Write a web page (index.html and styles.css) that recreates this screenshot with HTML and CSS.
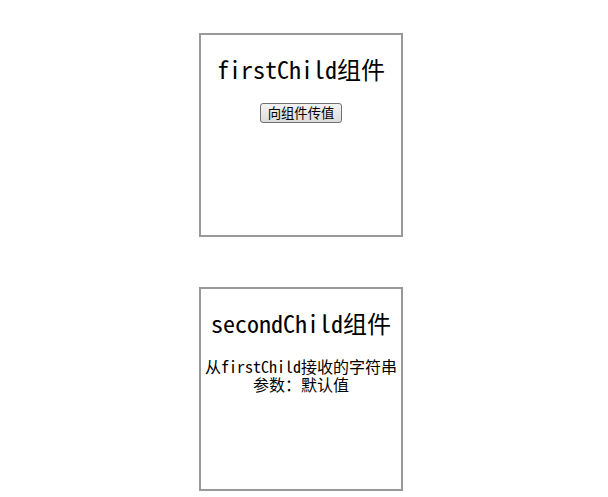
FILE: index.html
```html
<!DOCTYPE html>
<html>
<head>
  <meta charset="utf-8">
  <title>组件传值</title>
  <link rel="stylesheet" href="styles.css">
</head>
<body>

  <!--父组件容器-->
  <div id="app">

    <!--firstChild-->
    <div class="child-box">
      <h2 class="child-title">firstChild组件</h2>
      <button class="send-btn">向组件传值</button>
    </div>

    <!--secondChild-->
    <div class="child-box">
      <h2 class="child-title">secondChild组件</h2>
      <p class="child-msg">从firstChild接收的字符串参数：默认值</p>
    </div>

  </div>

</body>
</html>
```

FILE: styles.css
```css
body {
  margin: 0;
  font-family: "Noto Sans Mono CJK SC", "Liberation Mono", "Noto Sans CJK SC", monospace;
  color: #000;
  background-color: #fff;
}
#app {
  width: 602px;
  display: flex;
  flex-direction: column;
  align-items: center;
  gap: 50px;
  padding-top: 33px;
}
.child-box {
  width: 200px;
  height: 200px;
  border: 2px solid #999;
  text-align: center;
}
.child-title {
  font-size: 24px;
  line-height: 28px;
  font-weight: normal;
  margin: 20px 0;
}
.send-btn {
  font-family: "Noto Sans CJK SC", sans-serif;
  font-size: 13.33px;
  line-height: 16px;
  padding: 1px 7px;
  height: 20px;
  vertical-align: top;
  background: linear-gradient(#f3f3f3, #dcdcdc);
  border: 1px solid #707070;
  border-radius: 3px;
  color: #000;
}
.child-msg {
  font-size: 16px;
  line-height: 18px;
  margin: 20px 0;
}
```
